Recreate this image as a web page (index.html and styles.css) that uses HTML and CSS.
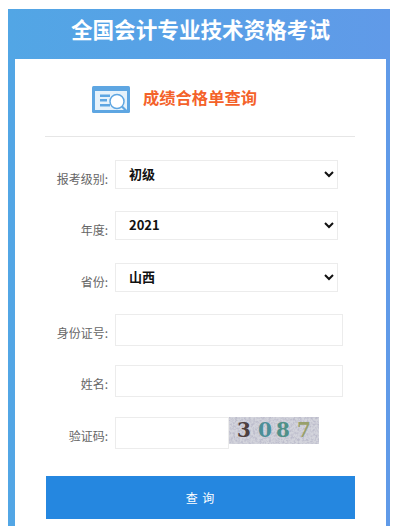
FILE: index.html
```html
<!DOCTYPE html>
<html lang="zh-CN">

<head>
    <meta charset="UTF-8">
    <title>全国会计专业技术资格考试</title>
    <link rel="stylesheet" href="styles.css">
</head>

<body>
    <div class="panel">
        <h1 class="panel-title">全国会计专业技术资格考试</h1>
        <div class="card">
            <div class="card-head">
                <svg class="head-icon" width="38" height="28" viewBox="0 0 38 28">
                    <rect x="0" y="0" width="38" height="27" rx="1.5" fill="#5ea6e2"/>
                    <rect x="3" y="5" width="32" height="19" fill="#e6f2fb"/>
                    <path d="M8 8.500h10v2.500H8zM8 13h7v2.500H8zM8 18h10v2.500H8z" fill="#5ea6e2"/>
                    <circle cx="25" cy="15.500" r="7" fill="#fff" stroke="#5ea6e2" stroke-width="1.500"/>
                    <path d="M30 20.500l5 5" stroke="#5ea6e2" stroke-width="2.200"/>
                </svg>
                <h2 class="head-text">成绩合格单查询</h2>
            </div>
            <form class="query-form">
                <div class="row">
                    <label class="row-label">报考级别:</label>
                    <select class="field-select">
                        <option>初级</option>
                    </select>
                </div>
                <div class="row">
                    <label class="row-label">年度:</label>
                    <select class="field-select">
                        <option>2021</option>
                    </select>
                </div>
                <div class="row">
                    <label class="row-label">省份:</label>
                    <select class="field-select">
                        <option>山西</option>
                    </select>
                </div>
                <div class="row">
                    <label class="row-label">身份证号:</label>
                    <input class="field-input" type="text">
                </div>
                <div class="row">
                    <label class="row-label">姓名:</label>
                    <input class="field-input" type="text">
                </div>
                <div class="row">
                    <label class="row-label">验证码:</label>
                    <input class="field-input field-code" type="text">
                    <div class="captcha">
                        <svg class="captcha-noise" width="90" height="27">
                            <filter id="noise" x="0" y="0" width="100%" height="100%">
                                <feTurbulence type="fractalNoise" baseFrequency="0.45" numOctaves="3" seed="4"/>
                                <feColorMatrix type="matrix" values="0 0 0 0 0.50  0 0 0 0 0.50  0 0 0 0 0.60  2.600 0 0 0 -1.000"/>
                            </filter>
                            <rect width="90" height="27" filter="url(#noise)"/>
                        </svg>
                        <span class="digit digit-a">3</span>
                        <span class="digit digit-b">0</span>
                        <span class="digit digit-c">8</span>
                        <span class="digit digit-d">7</span>
                    </div>
                </div>
                <button class="submit" type="button">查 询</button>
            </form>
        </div>
    </div>
</body>

</html>
```
FILE: styles.css
```css
html, body {
    height: 526px;
    overflow: hidden;
}

body {
    margin: 0;
    background: #fff;
    font-family: "Noto Sans CJK SC", "Noto Sans", sans-serif;
    color: #666;
}

.panel {
    box-sizing: border-box;
    height: 517px;
    width: 382px;
    margin: 9px 0 0 8px;
    padding: 0 4px 0 7px;
    background: linear-gradient(to right, #52a6e5, #609ae8);
}

.panel-title {
    margin: 0;
    height: 50px;
    line-height: 39px;
    text-align: center;
    font-size: 21.6px;
    font-weight: bold;
    color: #fff;
}

.card {
    height: 467px;
    padding: 0 31px 0 30px;
    background: #fff;
}

.card-head {
    display: flex;
    align-items: center;
    height: 77px;
    padding-left: 47px;
    border-bottom: 1px solid #e6e6e6;
}

.head-icon {
    margin-top: 5px;
    margin-right: 13px;
}

.head-text {
    margin: 0 0 2px;
    font-size: 16.3px;
    font-weight: bold;
    color: #f4622a;
}

.query-form {
    padding-top: 23px;
}

.row {
    display: flex;
    align-items: flex-start;
    height: 51.33px;
}

.row-label {
    width: 63px;
    margin-right: 7px;
    line-height: 37px;
    text-align: right;
    font-size: 12px;
    white-space: nowrap;
}

.field-select {
    box-sizing: border-box;
    width: 223px;
    height: 29px;
    padding: 0 0 2px 9px;
    border: 1px solid #ececec;
    border-radius: 0;
    background: #fff;
    font-family: inherit;
    font-size: 13px;
    font-weight: bold;
    color: #111;
}

.field-input {
    box-sizing: border-box;
    width: 228px;
    height: 32px;
    padding: 0 8px;
    border: 1px solid #ececec;
    border-radius: 0;
}

.field-code {
    width: 114px;
}

.captcha {
    position: relative;
    width: 90px;
    height: 27px;
    background: #d3d4dc;
    overflow: hidden;
}

.captcha-noise {
    display: block;
}

.digit {
    position: absolute;
    top: 0;
    font-family: "DejaVu Serif", serif;
    font-size: 20px;
    font-weight: bold;
    line-height: 27px;
}

.digit-a {
    left: 8px;
    color: #4d3f3f;
}

.digit-b {
    left: 29px;
    color: #4c8f97;
}

.digit-c {
    left: 47px;
    color: #4f9088;
}

.digit-d {
    left: 68px;
    color: #98a06a;
}

.submit {
    display: block;
    width: 309px;
    height: 43px;
    margin: 8px 0 0 1px;
    padding: 0;
    border: none;
    background: #2587e0;
    font-family: inherit;
    font-size: 12px;
    color: #fff;
    letter-spacing: 1px;
}
```
